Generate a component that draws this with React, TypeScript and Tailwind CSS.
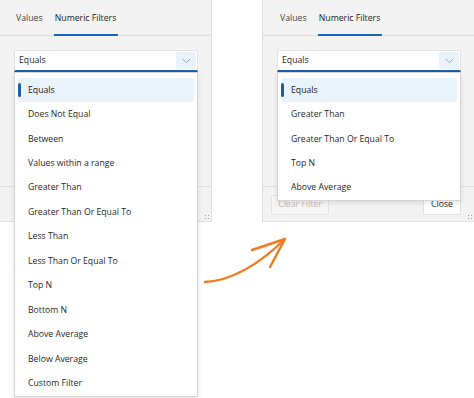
const leftItems = [
  "Equals",
  "Does Not Equal",
  "Between",
  "Values within a range",
  "Greater Than",
  "Greater Than Or Equal To",
  "Less Than",
  "Less Than Or Equal To",
  "Top N",
  "Bottom N",
  "Above Average",
  "Below Average",
  "Custom Filter",
]

const rightItems = ["Equals", "Greater Than", "Greater Than Or Equal To", "Top N", "Above Average"]

function Chevron() {
  return (
    <svg width="9" height="6" viewBox="0 0 9 6" fill="none">
      <path d="M1 1.2 L4.5 4.5 L8 1.2" stroke="#9aa6b2" strokeWidth="1" strokeLinecap="round" strokeLinejoin="round" />
    </svg>
  )
}

function Grip() {
  return (
    <div className="absolute right-[2px] bottom-[2px] grid grid-cols-2 gap-[1.5px]">
      <span className="w-[1.5px] h-[1.5px] bg-[#9a9a9a]" />
      <span className="w-[1.5px] h-[1.5px] bg-[#9a9a9a]" />
      <span className="w-[1.5px] h-[1.5px] bg-[#9a9a9a]" />
      <span className="w-[1.5px] h-[1.5px] bg-[#9a9a9a]" />
    </div>
  )
}

function Panel({ items, side }: { items: string[]; side: "left" | "right" }) {
  return (
    <div
      className={
        side === "left"
          ? "relative w-[212px] h-[222px] shrink-0 bg-[#f3f3f3] border-r border-b border-[#e0e0e0] flex flex-col"
          : "relative w-[212px] h-[222px] shrink-0 bg-[#f3f3f3] border-l border-b border-[#e0e0e0] flex flex-col"
      }
    >
      {/* tabs */}
      <div className={side === "left" ? "h-[36px] flex items-stretch border-b border-[#dcdcdc] pl-[14px] gap-[9px]" : "h-[36px] flex items-stretch border-b border-[#dcdcdc] pl-[15px] gap-[9px]"}>
        <div className="flex items-center px-[2px] pt-[3px] text-[#444]">Values</div>
        <div className="relative w-[64px] flex items-center justify-center pt-[3px] text-[#222]">
          Numeric Filters
          <span className="absolute left-0 right-0 bottom-[-1px] h-[2.5px] bg-[#1565c0]" />
        </div>
      </div>

      {/* body */}
      <div className="flex-1 pt-[14px] pl-[14px] pr-[13px]">
        <div className="h-[22px] bg-white border border-[#e2e2e2] border-b-2 border-b-[#1a5fa8] flex items-center pl-[4px] pr-[1px] text-[#1f1f1f]">
          <span>Equals</span>
          <div className="ml-auto w-[20px] h-[17px] bg-[#eaf2fb] rounded-[2px] flex items-center justify-center">
            <Chevron />
          </div>
        </div>
      </div>

      {/* footer */}
      <div className="h-[35px] border-t border-[#e0e0e0] flex items-center justify-between pl-[8px] pr-[13px] pt-[2px]">
        {side === "right" && (
          <>
            <div className="w-[58px] h-[20px] bg-[#f5f5f5] border border-[#e4e4e4] rounded-[2px] flex items-center justify-center text-[#bdbdbd]">
              Clear Filter
            </div>
            <div className="w-[38px] h-[20px] bg-white border border-[#e2e2e2] rounded-[2px] flex items-center justify-center text-[#2a2a2a]">
              Close
            </div>
          </>
        )}
      </div>
      <Grip />

      {/* dropdown */}
      <div className="absolute left-[14px] top-[72px] w-[184px] bg-white border border-[#d4d4d4] shadow-[0_2px_5px_rgba(0,0,0,0.1)] pt-[5px] z-10">
        {items.map((item, i) => (
          <div
            key={item}
            className={
              i === 0
                ? "relative h-[24.45px] mx-[3px] pl-[10px] flex items-center bg-[#eaf2fb] rounded-[3px] text-[#1a1a1a]"
                : "relative h-[24.45px] mx-[3px] pl-[10px] flex items-center text-[#1f1f1f]"
            }
          >
            {i === 0 && <span className="absolute left-0 top-[5px] w-[2.5px] h-[14px] bg-[#1a5fa8] rounded-full" />}
            {item}
          </div>
        ))}
      </div>
    </div>
  )
}

export default function App() {
  return (
    <div
      className="relative w-[474px] h-[398px] bg-white overflow-hidden flex items-start text-[8.7px]"
      style={{ fontFamily: '"Open Sans", "Noto Sans", sans-serif' }}
    >
      <Panel items={leftItems} side="left" />
      <div className="w-[50px] shrink-0" />
      <Panel items={rightItems} side="right" />

      <svg className="absolute left-[195px] top-[230px]" width="100" height="60" viewBox="195 230 100 60" fill="none">
        <path d="M205 282 Q243 280 285 239" stroke="#f47a1f" strokeWidth="2.4" strokeLinecap="round" />
        <path d="M252 250 L285 239 L270 267" stroke="#f47a1f" strokeWidth="2.4" strokeLinecap="round" strokeLinejoin="round" />
      </svg>
    </div>
  )
}
